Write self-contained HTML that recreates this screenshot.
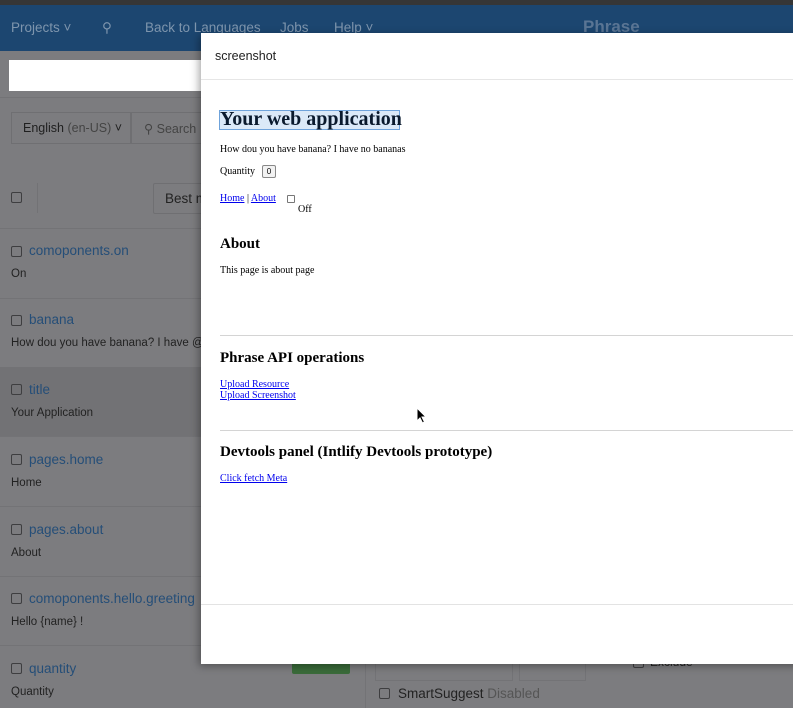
<!DOCTYPE html>
<html><head><meta charset="utf-8"><style>
*{margin:0;padding:0;box-sizing:border-box}
html{width:793px;height:708px;overflow:hidden}
body{width:793px;height:708px;overflow:hidden;position:relative;background:#7c7c7f;font-family:"Liberation Sans",sans-serif;white-space:nowrap}
.a{position:absolute}
.os{font-family:"Liberation Sans",sans-serif}
.top{left:0;top:0;width:793px;height:5px;background:#363636}
.nav{left:0;top:5px;width:793px;height:46px;background:#1c4670}
.nav span{position:absolute;top:15px;color:#7e95ad;font-size:13.5px}
.row{left:0;width:365px;height:70px;border-bottom:1px solid #737376;overflow:hidden}
.cb{position:absolute;width:11px;height:11px;border:1px solid #3e3e40;border-radius:2px;background:transparent}
.key{position:absolute;left:29px;color:#254e78;font-size:13.5px}
.val{position:absolute;left:11px;color:#222;font-size:11.5px}
.modal{left:201px;top:33px;width:600px;height:631px;background:#fff;box-shadow:-2px 2px 8px rgba(0,0,0,.35)}
.s{font-family:"Liberation Serif",serif;color:#000}
a{color:#0000ee;text-decoration:underline}
</style></head><body>
<div class="a top"></div>
<div class="a nav os">
<span style="left:11px">Projects ˅</span>
<span style="left:102px">⚲</span>
<span style="left:145px">Back to Languages</span>
<span style="left:280px">Jobs</span>
<span style="left:334px">Help ˅</span>
<span style="left:583px;top:12px;font-size:17px;font-weight:bold;color:#5a7594">Phrase</span>
</div>
<div class="a" style="left:9px;top:60px;width:200px;height:31px;background:#fff"></div>
<div class="a" style="left:0;top:97px;width:365px;height:1px;background:#737376"></div>
<div class="a os" style="left:11px;top:112px;width:120px;height:32px;border:1px solid #6f6f72;color:#1f1f1f;font-size:12.5px;padding:8px 11px">English <span style="color:#444">(en-US)</span> ˅</div>
<div class="a os" style="left:131px;top:112px;width:80px;height:32px;border:1px solid #6f6f72;color:#444;font-size:12.5px;padding:8px 12px">⚲ Search</div>
<div class="cb" style="left:11px;top:192px"></div>
<div class="a" style="left:37px;top:183px;width:1px;height:30px;background:#727275"></div>
<div class="a os" style="left:153px;top:183px;width:60px;height:31px;border:1px solid #6f6f72;border-radius:2px;color:#222;font-size:13.5px;padding:7px 11px">Best m</div>
<div class="a" style="left:0;top:228px;width:365px;height:1px;background:#737376"></div>

<div class="a row os" style="top:229px"><div class="cb" style="left:11px;top:17px"></div><div class="key" style="top:14px">comoponents.on</div><div class="val" style="top:39px">On</div></div>
<div class="a row os" style="top:298px"><div class="cb" style="left:11px;top:17px"></div><div class="key" style="top:14px">banana</div><div class="val" style="top:39px">How dou you have banana? I have @:b</div></div>
<div class="a row os" style="top:367px;background:#727275"><div class="cb" style="left:11px;top:17px"></div><div class="key" style="top:15px">title</div><div class="val" style="top:40px">Your Application</div></div>
<div class="a row os" style="top:437px"><div class="cb" style="left:11px;top:17px"></div><div class="key" style="top:15px">pages.home</div><div class="val" style="top:40px">Home</div></div>
<div class="a row os" style="top:507px"><div class="cb" style="left:11px;top:17px"></div><div class="key" style="top:15px">pages.about</div><div class="val" style="top:40px">About</div></div>
<div class="a row os" style="top:576px"><div class="cb" style="left:11px;top:17px"></div><div class="key" style="top:15px">comoponents.hello.greeting</div><div class="val" style="top:40px">Hello {name} !</div></div>
<div class="a row os" style="top:646px;border:none;height:62px"><div class="cb" style="left:11px;top:17px"></div><div class="key" style="top:15px">quantity</div><div class="val" style="top:40px">Quantity</div></div>
<div class="a" style="left:292px;top:656px;width:58px;height:18px;background:#3a6b3a;border-radius:2px"></div>
<div class="a" style="left:365px;top:640px;width:1px;height:68px;background:#737376"></div>
<div class="a" style="left:375px;top:664px;width:138px;height:17px;border:1px solid #737376;border-top:none"></div>
<div class="a" style="left:519px;top:664px;width:67px;height:17px;border:1px solid #737376;border-top:none"></div>
<div class="cb" style="left:633px;top:657px"></div>
<div class="a os" style="left:650px;top:655px;font-size:12px;color:#222">Exclude</div>
<div class="cb" style="left:379px;top:688px"></div>
<div class="a os" style="left:398px;top:686px;font-size:13.5px;color:#222">SmartSuggest <span style="color:#555">Disabled</span></div>

<div class="a modal">
<div class="a os" style="left:14px;top:16px;font-size:12.5px;color:#222">screenshot</div>
<div class="a" style="left:0;top:46px;width:600px;height:1px;background:#e6e6e6"></div>
<div class="a s" style="left:18px;top:77px;width:181px;height:20px;background:#dbe9f8;border:1px solid #6fa3db"></div>
<div class="a s" style="left:19px;top:75px;font-size:20px;font-weight:bold;color:#0a1a2e">Your web application</div>
<div class="a s" style="left:19px;top:111px;font-size:10px">How dou you have banana? I have no bananas</div>
<div class="a s" style="left:19px;top:133px;font-size:10px">Quantity</div>
<div class="a" style="left:61px;top:132px;width:14px;height:13px;border:1px solid #888;border-radius:2px;background:#f2f2f2;font-size:8px;text-align:center;line-height:11px;font-family:'Liberation Sans'">0</div>
<div class="a s" style="left:19px;top:160px;font-size:10px"><a>Home</a> | <a>About</a></div>
<div class="a" style="left:86px;top:162px;width:8px;height:8px;border:1px solid #777;border-radius:1px"></div>
<div class="a s" style="left:97px;top:171px;font-size:10px">Off</div>
<div class="a s" style="left:19px;top:203px;font-size:15px;font-weight:bold">About</div>
<div class="a s" style="left:19px;top:232px;font-size:10px">This page is about page</div>
<div class="a" style="left:19px;top:302px;width:581px;height:1px;background:#d4d4d4"></div>
<div class="a s" style="left:19px;top:317px;font-size:15px;font-weight:bold">Phrase API operations</div>
<div class="a s" style="left:19px;top:346px;font-size:10px;line-height:11px"><a>Upload Resource</a><br><a>Upload Screenshot</a></div>
<svg class="a" style="left:215px;top:374px" width="12" height="18" viewBox="0 0 12 18"><path d="M1 1 L1 14 L4 11 L6.5 16 L8.5 15 L6 10 L10 10 Z" fill="#000" stroke="#fff" stroke-width="1"/></svg>
<div class="a" style="left:19px;top:397px;width:581px;height:1px;background:#d4d4d4"></div>
<div class="a s" style="left:19px;top:411px;font-size:15px;font-weight:bold">Devtools panel (Intlify Devtools prototype)</div>
<div class="a s" style="left:19px;top:440px;font-size:10px"><a>Click fetch Meta</a></div>
<div class="a" style="left:0;top:571px;width:600px;height:1px;background:#e3e3e3"></div>
</div>
</body></html>
